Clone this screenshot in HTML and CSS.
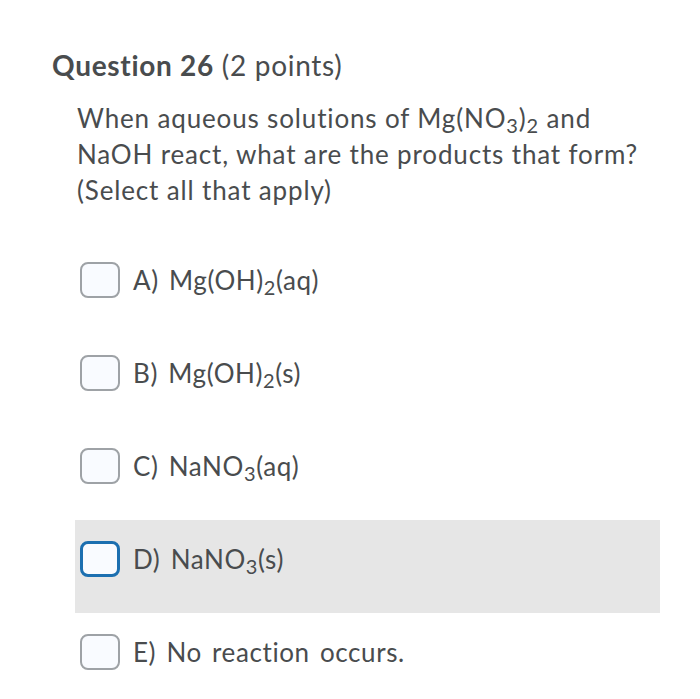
FILE: index.html
```html
<!DOCTYPE html>
<html lang="en">
<head>
<meta charset="utf-8">
<title>Question 26</title>
<link rel="stylesheet" href="styles.css">
</head>
<body>
<div class="page">
  <h1 class="title"><span class="title-strong">Question 26</span> (2 points)</h1>
  <p class="prompt">When aqueous solutions of Mg(NO<sub>3</sub>)<sub>2</sub> and<br>NaOH react, what are the products that form?<br>(Select all that apply)</p>
  <ul class="options">
    <li class="option"><span class="box"></span><span class="label">A) Mg(OH)<sub>2</sub>(aq)</span></li>
    <li class="option"><span class="box"></span><span class="label">B) Mg(OH)<sub>2</sub>(s)</span></li>
    <li class="option"><span class="box"></span><span class="label">C) NaNO<sub>3</sub>(aq)</span></li>
    <li class="option option-hover"><span class="box box-focus"></span><span class="label">D) NaNO<sub>3</sub>(s)</span></li>
    <li class="option"><span class="box"></span><span class="label">E) No reaction occurs.</span></li>
  </ul>
</div>
</body>
</html>
```

FILE: styles.css
```css
html, body {
  margin: 0;
  padding: 0;
  background: #ffffff;
}

body {
  font-family: Lato, "Open Sans", sans-serif;
  color: #494c4e;
}

.page {
  padding: 48px 20px 0 52px;
}

.title {
  margin: 0;
  font-size: 28px;
  line-height: 34px;
  font-weight: 400;
  letter-spacing: 0.7px;
  white-space: nowrap;
}

.title-strong {
  font-weight: 700;
}

.prompt {
  margin: 18px 0 0 25px;
  font-size: 26px;
  line-height: 36px;
  letter-spacing: 0.85px;
  white-space: nowrap;
}

sub {
  font-size: 20px;
  line-height: 0;
  vertical-align: -5px;
}

.options {
  list-style: none;
  margin: 33px 0 0 23px;
  padding: 0;
  width: 585px;
}

.option {
  display: flex;
  align-items: center;
  gap: 13px;
  padding: 21px 0 36px 5px;
  height: 36px;
}

.option-hover {
  background: #e6e6e6;
}

.box {
  box-sizing: border-box;
  width: 40px;
  height: 36px;
  border: 2px solid #9ea2a6;
  border-radius: 8px;
  background: #f9fbff;
  flex: none;
}

.box-focus {
  border: 3px solid #1c6fb0;
}

.label {
  font-size: 26px;
  line-height: 36px;
  letter-spacing: 0.6px;
  word-spacing: 3px;
  white-space: nowrap;
}
```
